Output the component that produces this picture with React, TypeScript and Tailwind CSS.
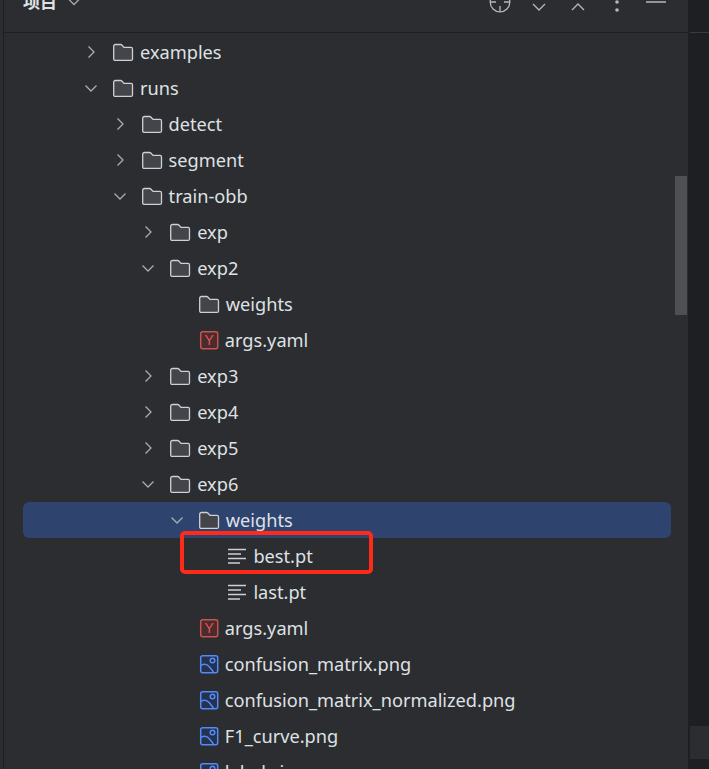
import React from 'react';

type Kind = 'folder' | 'text' | 'yaml' | 'image';

// depth drives the indent, open is undefined for rows without a chevron
const rows: { name: string; depth: number; kind: Kind; open?: boolean; selected?: boolean }[] = [
  { name: 'examples', depth: 0, kind: 'folder', open: false },
  { name: 'runs', depth: 0, kind: 'folder', open: true },
  { name: 'detect', depth: 1, kind: 'folder', open: false },
  { name: 'segment', depth: 1, kind: 'folder', open: false },
  { name: 'train-obb', depth: 1, kind: 'folder', open: true },
  { name: 'exp', depth: 2, kind: 'folder', open: false },
  { name: 'exp2', depth: 2, kind: 'folder', open: true },
  { name: 'weights', depth: 3, kind: 'folder' },
  { name: 'args.yaml', depth: 3, kind: 'yaml' },
  { name: 'exp3', depth: 2, kind: 'folder', open: false },
  { name: 'exp4', depth: 2, kind: 'folder', open: false },
  { name: 'exp5', depth: 2, kind: 'folder', open: false },
  { name: 'exp6', depth: 2, kind: 'folder', open: true },
  { name: 'weights', depth: 3, kind: 'folder', open: true, selected: true },
  { name: 'best.pt', depth: 4, kind: 'text' },
  { name: 'last.pt', depth: 4, kind: 'text' },
  { name: 'args.yaml', depth: 3, kind: 'yaml' },
  { name: 'confusion_matrix.png', depth: 3, kind: 'image' },
  { name: 'confusion_matrix_normalized.png', depth: 3, kind: 'image' },
  { name: 'F1_curve.png', depth: 3, kind: 'image' },
  { name: 'labels.jpg', depth: 3, kind: 'image' },
];

const Chevron = ({ open }: { open: boolean }) => (
  <svg width="14" height="14" viewBox="0 0 14 14" fill="none" stroke="#a8adb5" strokeWidth="1.3">
    {open ? <path d="M1.5 4.5 7 10l5.500-5.500" /> : <path d="M4.500 1.500 10 7l-5.500 5.500" />}
  </svg>
);

const FileIcon = ({ kind }: { kind: Kind }) => {
  if (kind === 'folder') {
    return (
      <svg width="22" height="20" viewBox="0 0 22 20" fill="#43454a" stroke="#ced0d6" strokeWidth="1.300">
        <path d="M1.700 4.200a1.700 1.700 0 0 1 1.700-1.700h5.200c.5 0 .9.200 1.200.5l2.200 2.400h7a1.500 1.500 0 0 1 1.500 1.500v10a1.500 1.500 0 0 1-1.500 1.500H3.200a1.500 1.500 0 0 1-1.500-1.500z" />
      </svg>
    );
  }
  if (kind === 'text') {
    return (
      <svg width="20" height="20" viewBox="0 0 20 20" fill="none" stroke="#ced0d6" strokeWidth="1.500">
        <path d="M1 3.500h18M1 8h13M1 12.500h18M1 17h12" />
      </svg>
    );
  }
  if (kind === 'yaml') {
    return (
      <svg width="20" height="20" viewBox="0 0 20 20">
        <rect x="1.700" y="1.700" width="17" height="17" rx="2" fill="#4a2b2e" stroke="#c75450" strokeWidth="1.500" />
        <text x="10.200" y="15.200" textAnchor="middle" fontSize="14" fontFamily="'Liberation Sans', sans-serif" fill="#e0575a">
          Y
        </text>
      </svg>
    );
  }
  return (
    <svg width="20" height="20" viewBox="0 0 20 20" fill="none" stroke="#548af7" strokeWidth="1.500">
      <rect x="1.700" y="1.700" width="17" height="17" rx="2" fill="#25324d" />
      <circle cx="13.500" cy="6.500" r="2.300" />
      <path d="M2 11.500c3-2 6-1.500 8.500 1.500l4 5" />
    </svg>
  );
};

export default function App() {
  return (
    <div className="relative flex h-[769px] w-[709px] overflow-hidden bg-[#2b2d30] font-['Noto_Sans','Noto_Sans_CJK_SC',sans-serif] text-[#dfe1e5]">
      <div className="ml-[3px] w-px shrink-0 bg-[#1e1f22]" />

      <div className="flex min-w-0 flex-1 flex-col">
        {/* Tool window header, cut off by the top of the picture */}
        <div className="h-[33px] shrink-0 overflow-hidden border-b border-[#1e1f22]">
          <div className="-mt-[13px] flex h-[30px] items-center pl-[19px] pr-[21px]">
            <span className="text-[17px] font-bold">项目</span>
            <svg className="ml-[10px]" width="14" height="14" viewBox="0 0 14 14" fill="none" stroke="#a8adb5" strokeWidth="1.300">
              <path d="M1.500 4 7 9.500 12.500 4" />
            </svg>
            <div className="ml-auto flex items-center gap-[17px] text-[#b4b8bf]">
              <svg className="ml-px" width="22" height="22" viewBox="0 0 22 22" fill="none" stroke="currentColor" strokeWidth="1.300">
                <circle cx="11" cy="11" r="9.800" />
                <path d="M11 1v20M1 11h20" strokeDasharray="6 8" />
              </svg>
              <svg className="mt-[10px]" width="22" height="14" viewBox="0 0 22 14" fill="none" stroke="currentColor" strokeWidth="1.300">
                <path d="M5 4l6 6 6-6" />
              </svg>
              <svg className="mt-[10px]" width="22" height="14" viewBox="0 0 22 14" fill="none" stroke="currentColor" strokeWidth="1.300">
                <path d="M5 10l6-6 6 6" />
              </svg>
              <svg className="mt-[9px]" width="22" height="16" viewBox="0 0 22 16" fill="currentColor">
                <circle cx="11" cy="3" r="1.800" />
                <circle cx="11" cy="11" r="1.800" />
              </svg>
              <svg width="22" height="14" viewBox="0 0 22 14" fill="none" stroke="currentColor" strokeWidth="1.500">
                <path d="M1 7h20" />
              </svg>
            </div>
          </div>
        </div>

        {/* Project tree */}
        <div className="flex flex-col pl-[19px] pr-[17px] pt-px">
          {rows.map((row, i) => (
            <div
              key={i}
              className={`flex h-[36px] shrink-0 items-center rounded-[6px] text-[18.2px] leading-none ${row.selected ? 'bg-[#2e436e]' : ''}`}
              style={{ paddingLeft: 61 + row.depth * 28.6 }}
            >
              <span className="flex w-[14px] shrink-0 justify-center">
                {row.open !== undefined && <Chevron open={row.open} />}
              </span>
              <span className={`flex shrink-0 ${row.kind === 'folder' ? 'ml-[14px] w-[28px]' : 'ml-[15px] w-[26px]'}`}>
                <FileIcon kind={row.kind} />
              </span>
              <span className="whitespace-nowrap">{row.name}</span>
            </div>
          ))}
        </div>
      </div>

      {/* Right tool strip */}
      <div className="flex w-[21px] shrink-0 flex-col bg-[#1e1f22] pl-[2px]">
        <div className="mt-[32px] h-px bg-[#393b40]" />
        <div className="mt-[693px] h-[33px] bg-[#2b2d30]" />
      </div>

      {/* Scrollbar thumb */}
      <div className="absolute left-[675px] top-[176px] h-[139px] w-[12px] bg-[#4f5054]" />

      {/* Red annotation drawn over the screenshot */}
      <div className="absolute left-[180px] top-[531px] h-[43px] w-[193px] rounded-[5px] border-[4px] border-[#ff2a1a]" />
    </div>
  );
}
